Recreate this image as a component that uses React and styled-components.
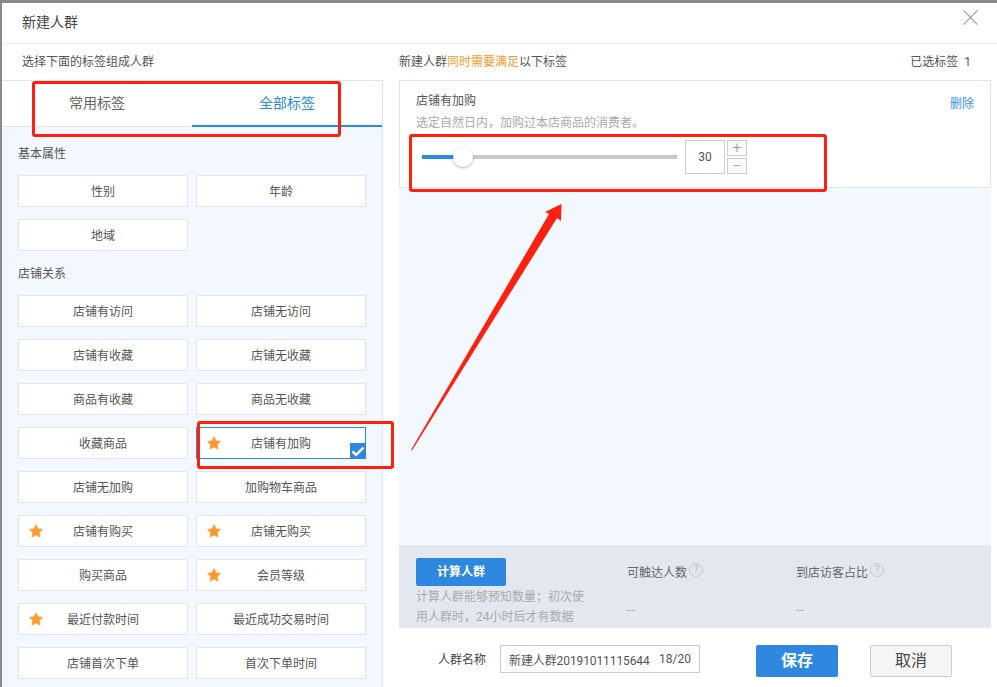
import styled, { createGlobalStyle } from "styled-components";

const GlobalStyle = createGlobalStyle`
html, body {
    margin: 0;
    padding: 0;
    background: #fff;
}
body {
    font-family: "Roboto", "Noto Sans CJK SC", sans-serif;
    font-size: 12px;
    color: #555;
}
* {
    box-sizing: border-box;
}
`;

const basicTags = [
    { name: "性别" },
    { name: "年龄" },
    { name: "地域" },
];

const shopTags = [
    { name: "店铺有访问" },
    { name: "店铺无访问" },
    { name: "店铺有收藏" },
    { name: "店铺无收藏" },
    { name: "商品有收藏" },
    { name: "商品无收藏" },
    { name: "收藏商品" },
    { name: "店铺有加购", star: true, selected: true },
    { name: "店铺无加购" },
    { name: "加购物车商品" },
    { name: "店铺有购买", star: true },
    { name: "店铺无购买", star: true },
    { name: "购买商品" },
    { name: "会员等级", star: true },
    { name: "最近付款时间", star: true },
    { name: "最近成功交易时间" },
    { name: "店铺首次下单" },
    { name: "首次下单时间" },
];

const Star = () => (
    <StarIcon viewBox="0 0 14 14">
        <path
            d="M7 .6l2 4.2 4.6.6-3.4 3.2.9 4.6L7 10.9l-4.1 2.3.9-4.6L.4 5.4 5 4.8z"
            fill="#ff9a2e"
            stroke="#ff9a2e"
            strokeWidth="0.6"
            strokeLinejoin="round"
        />
    </StarIcon>
);

const TagGrid = ({ tags }) => (
    <Tags>
        {tags.map((tag) => (
            <Tag key={tag.name} $selected={tag.selected}>
                {tag.star && <Star />}
                {tag.name}
                {tag.selected && (
                    <Check>
                        <svg width="16" height="16" viewBox="0 0 16 16">
                            <path
                                d="M2.5 8.4l3.6 3.4L13.5 4.6"
                                fill="none"
                                stroke="#fff"
                                strokeWidth="2.4"
                            />
                        </svg>
                    </Check>
                )}
            </Tag>
        ))}
    </Tags>
);

const App = () => {
    const sliderValue = 16; // percent of the track

    return (
        <Page>
            <GlobalStyle />
            <Frame>
                <Header>
                    <Title>新建人群</Title>
                    <Close viewBox="0 0 16 16">
                        <path d="M.5.5l15 15M15.5.5l-15 15" stroke="#999" strokeWidth="1.2" fill="none" />
                    </Close>
                </Header>
                <SubHeader>
                    <SubLeft>选择下面的标签组成人群</SubLeft>
                    <SubRight>
                        <span>
                            新建人群<Orange>同时需要满足</Orange>以下标签
                        </span>
                        <SelectedCount>已选标签&nbsp;&nbsp;1</SelectedCount>
                    </SubRight>
                </SubHeader>
                <Body>
                    <LeftPanel>
                        <TabBar>
                            <TabItem>常用标签</TabItem>
                            <TabItem $active>全部标签</TabItem>
                        </TabBar>
                        <TagList>
                            <SectionLabel>基本属性</SectionLabel>
                            <TagGrid tags={basicTags} />
                            <SectionLabel $spaced>店铺关系</SectionLabel>
                            <TagGrid tags={shopTags} />
                        </TagList>
                    </LeftPanel>
                    <RightPanel>
                        <Card>
                            <CardTop>
                                <CardTitle>店铺有加购</CardTitle>
                                <DeleteLink>删除</DeleteLink>
                            </CardTop>
                            <CardDesc>选定自然日内，加购过本店商品的消费者。</CardDesc>
                            <SliderRow>
                                <Track>
                                    <TrackFill style={{ width: `${sliderValue}%` }} />
                                    <Thumb style={{ left: `${sliderValue}%` }} />
                                </Track>
                                <NumberBox>30</NumberBox>
                                <Stepper>
                                    <StepButton>+</StepButton>
                                    <StepButton>−</StepButton>
                                </Stepper>
                            </SliderRow>
                        </Card>
                        <Canvas />
                        <Metrics>
                            <CalcColumn>
                                <CalcButton>计算人群</CalcButton>
                                <CalcHint>计算人群能够预知数量；初次使用人群时，24小时后才有数据</CalcHint>
                            </CalcColumn>
                            <MetricColumn $width={169}>
                                <MetricLabel>
                                    可触达人数<HelpIcon>?</HelpIcon>
                                </MetricLabel>
                                <MetricValue>--</MetricValue>
                            </MetricColumn>
                            <MetricColumn $width={180}>
                                <MetricLabel>
                                    到店访客占比<HelpIcon>?</HelpIcon>
                                </MetricLabel>
                                <MetricValue>--</MetricValue>
                            </MetricColumn>
                        </Metrics>
                        <Footer>
                            <NameLabel>人群名称</NameLabel>
                            <InputBox>
                                <NameInput readOnly value="新建人群20191011115644" />
                                <Counter>18/20</Counter>
                            </InputBox>
                            <SaveButton>保存</SaveButton>
                            <CancelButton>取消</CancelButton>
                        </Footer>
                    </RightPanel>
                </Body>
            </Frame>

            {/* red marks drawn over the screenshot */}
            <RedBox $left={32} $top={81} $width={309} $height={56} />
            <RedBox $left={409} $top={134} $width={418} $height={58} />
            <RedBox $left={197} $top={421} $width={197} $height={48} />
            <ArrowMark viewBox="0 0 997 687">
                <polygon
                    points="411,450 549,214 545,212 561.5,204 561,221 557,218 412,450.5"
                    fill="#ff2010"
                />
            </ArrowMark>
        </Page>
    );
};

const Page = styled.div`
position: relative;
width: 997px;
height: 687px;
overflow: hidden;
`

const Frame = styled.div`
display: flex;
flex-direction: column;
height: 687px;
border-top: 3px solid #8a8a8a;
border-left: 2px solid #8a8a8a;
`

const Header = styled.div`
display: flex;
align-items: center;
justify-content: space-between;
height: 41px;
padding: 0 19px 3px 20px;
border-bottom: 1px solid #eceef2;
flex-shrink: 0;
`

const Title = styled.div`
font-size: 14px;
line-height: 20px;
color: #444;
`

const Close = styled.svg`
width: 15px;
height: 15px;
margin-bottom: 8px;
`

const SubHeader = styled.div`
display: flex;
align-items: center;
height: 36px;
padding-bottom: 3px;
flex-shrink: 0;
color: #555;
`

const SubLeft = styled.div`
width: 397px;
padding-left: 20px;
`

const SubRight = styled.div`
display: flex;
justify-content: space-between;
width: 572px;
`

const SelectedCount = styled.span`
color: #555;
`

const Orange = styled.span`
color: #ff9a2e;
`

const Body = styled.div`
display: flex;
flex: 1;
min-height: 0;
`

const LeftPanel = styled.div`
display: flex;
flex-direction: column;
width: 381px;
border-top: 1px solid #dfe6f2;
border-right: 1px solid #dfe6f2;
background: #f3f7fe;
flex-shrink: 0;
`

const TabBar = styled.div`
display: flex;
height: 46px;
background: #fff;
border-bottom: 1px solid #dfe3ea;
flex-shrink: 0;
`

const TabItem = styled.div`
width: 190px;
height: 46px;
line-height: 44px;
text-align: center;
font-size: 14px;
color: ${(props) => (props.$active ? "#2f88e0" : "#666")};
border-bottom: ${(props) => (props.$active ? "2px solid #2f88e0" : "none")};
`

const TagList = styled.div`
padding: 16px 16px 0;
`

const SectionLabel = styled.div`
height: 20px;
line-height: 22px;
margin-top: ${(props) => (props.$spaced ? "12px" : "0")};
margin-bottom: 12px;
color: #555;
`

const Tags = styled.div`
display: grid;
grid-template-columns: repeat(2, 170px);
column-gap: 8px;
row-gap: 12px;
`

const Tag = styled.div`
position: relative;
height: 32px;
line-height: 32px;
text-align: center;
background: #fff;
color: #555;
border: 1px solid ${(props) => (props.$selected ? "#2f88e0" : "#dfe6f2")};
`

const StarIcon = styled.svg`
position: absolute;
left: 10px;
top: 8px;
width: 14px;
height: 14px;
`

const Check = styled.span`
position: absolute;
right: -1px;
bottom: -1px;
width: 16px;
height: 16px;
background: #2f88e0;
& svg {
    display: block;
}
`

const RightPanel = styled.div`
display: flex;
flex-direction: column;
width: 592px;
margin-left: 16px;
flex-shrink: 0;
`

const Card = styled.div`
height: 108px;
padding: 11px 16px 0 16px;
background: #fff;
border: 1px solid #dfe6f2;
flex-shrink: 0;
`

const CardTop = styled.div`
display: flex;
justify-content: space-between;
align-items: flex-start;
`

const CardTitle = styled.div`
line-height: 18px;
color: #555;
`

const DeleteLink = styled.a`
height: 18px;
line-height: 24px;
color: #3b8fdf;
`

const CardDesc = styled.div`
line-height: 18px;
margin-top: 4px;
color: #aaa;
`

const SliderRow = styled.div`
display: flex;
align-items: center;
margin-top: 8px;
padding-left: 6px;
`

const Track = styled.div`
position: relative;
width: 255px;
height: 4px;
background: #c8c8c8;
`

const TrackFill = styled.div`
height: 4px;
background: #2f88e0;
`

const Thumb = styled.div`
position: absolute;
top: -8px;
width: 20px;
height: 20px;
margin-left: -10px;
border-radius: 50%;
background: #fff;
box-shadow: 0 1px 3px rgba(0, 0, 0, 0.3);
`

const NumberBox = styled.div`
width: 40px;
height: 34px;
margin-left: 8px;
line-height: 32px;
text-align: center;
border: 1px solid #ccc;
color: #555;
`

const Stepper = styled.div`
display: flex;
flex-direction: column;
gap: 2px;
margin-left: 2px;
`

const StepButton = styled.div`
width: 20px;
height: 16px;
line-height: 13px;
text-align: center;
font-size: 16px;
font-weight: 300;
background: #fafafa;
border: 1px solid #ccc;
color: #999;
`

const Canvas = styled.div`
flex: 1;
background: #f3f7fe;
`

const Metrics = styled.div`
display: flex;
height: 83px;
padding: 13px 0 0 17px;
background: #e3e7f0;
flex-shrink: 0;
`

const CalcColumn = styled.div`
width: 211px;
`

const CalcButton = styled.div`
width: 90px;
height: 28px;
line-height: 29px;
text-align: center;
font-weight: bold;
color: #fff;
background: #2f88e0;
border-radius: 2px;
`

const CalcHint = styled.div`
width: 170px;
padding-top: 1px;
line-height: 20px;
color: #aaa;
`

const MetricColumn = styled.div`
width: ${(props) => props.$width}px;
`

const MetricLabel = styled.div`
display: flex;
align-items: center;
height: 26px;
color: #666;
`

const HelpIcon = styled.span`
width: 14px;
height: 14px;
margin: -3px 0 0 2px;
line-height: 12px;
text-align: center;
font-size: 10px;
color: #bbb;
border: 1px solid #c4c8ce;
border-radius: 50%;
`

const MetricValue = styled.div`
margin-top: 17px;
line-height: 18px;
letter-spacing: 1px;
font-variant-ligatures: none;
color: #aaa;
`

const Footer = styled.div`
display: flex;
align-items: flex-start;
height: 59px;
padding: 17px 0 0 39px;
background: #fff;
flex-shrink: 0;
`

const NameLabel = styled.div`
width: 48px;
line-height: 30px;
color: #444;
`

const InputBox = styled.div`
display: flex;
align-items: center;
width: 200px;
height: 28px;
margin-left: 14px;
padding: 0 8px 0 8px;
border: 1px solid #ccc;
`

const NameInput = styled.input`
flex: 1;
min-width: 0;
padding: 0;
border: none;
outline: none;
background: transparent;
font: inherit;
letter-spacing: -0.1px;
color: #555;
`

const Counter = styled.span`
color: #555;
`

const SaveButton = styled.div`
width: 82px;
height: 32px;
margin-left: 56px;
line-height: 32px;
text-align: center;
font-size: 16px;
font-weight: bold;
color: #fff;
background: #2f88e0;
border-radius: 2px;
`

const CancelButton = styled.div`
width: 82px;
height: 32px;
margin-left: 32px;
line-height: 30px;
text-align: center;
font-size: 16px;
color: #444;
background: #f5f5f5;
border: 1px solid #ccc;
border-radius: 2px;
`

const RedBox = styled.div`
position: absolute;
left: ${(props) => props.$left}px;
top: ${(props) => props.$top}px;
width: ${(props) => props.$width}px;
height: ${(props) => props.$height}px;
border: 3px solid #ff2010;
border-radius: 3px;
`

const ArrowMark = styled.svg`
position: absolute;
left: 0;
top: 0;
width: 997px;
height: 687px;
pointer-events: none;
`

export default App;
